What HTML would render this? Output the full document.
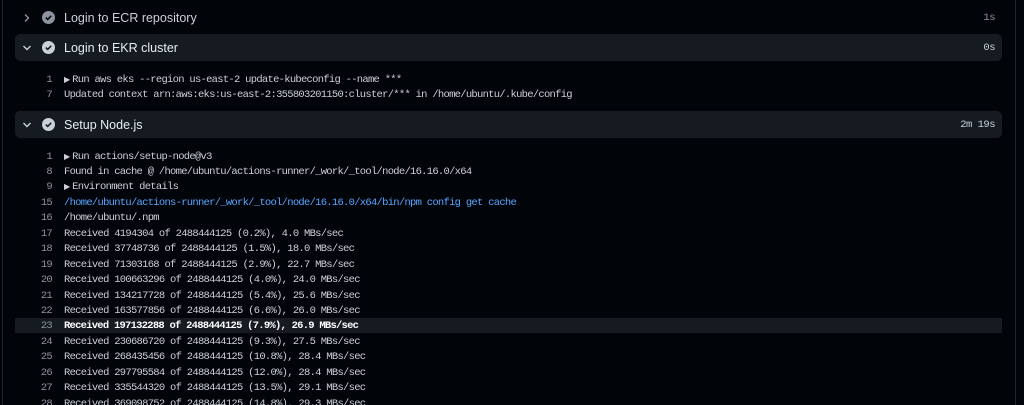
<!DOCTYPE html>
<html><head><style>
html,body{margin:0;width:1024px;height:405px;background:#010409;overflow:hidden;position:relative;font-family:"Liberation Sans",sans-serif;}
.vl{position:absolute;top:0;bottom:0;width:1px;background:#21262d}
.hdr{position:absolute;left:15px;width:987px;height:27px;border-radius:5px;}
.hdr.bg{background:#161b22}
.t{position:absolute;left:49px;top:6.5px;font-size:12.5px;color:#e6edf3}
.d{position:absolute;right:7px;top:7.5px;font:10.5px "Liberation Mono",monospace;letter-spacing:-0.5px;color:#c9d1d9}
.ic{position:absolute;left:27px;top:7px}
.chev{position:absolute;left:6px;top:8px}
.ln{position:absolute;left:15px;width:987px;height:15.45px;font:10.5px/15.45px "Liberation Mono",monospace;letter-spacing:-0.72px;color:#c9d1d9;white-space:pre}
.ln .n{position:absolute;left:0;width:37px;text-align:right;color:#8b949e}
.ln .c{position:absolute;left:49px;top:1.5px}
.ln .n{top:1.5px}
.tri{font-size:8px;letter-spacing:0;margin-right:2px}
.hl{background:#161b22}
.hl .c{color:#fff;font-weight:bold;letter-spacing:-0.75px}
.blue{color:#58a6ff}
</style></head><body>
<div class="vl" style="left:2px"></div>
<div class="vl" style="left:1015px"></div>

<div class="hdr" style="top:4px">
<svg class="chev" width="12" height="12" viewBox="0 0 12 12"><path d="M4 2.5L7.5 6L4 9.5" stroke="#8b949e" stroke-width="1.4" fill="none"/></svg>
<svg class="ic" width="13" height="13" viewBox="0 0 13 13"><circle cx="6.5" cy="6.5" r="6.5" fill="#8b949e"/><path d="M3.8 6.6L5.7 8.4L9.2 4.8" stroke="#010409" stroke-width="1.5" fill="none"/></svg>
<div class="t" style="color:#c9d1d9">Login to ECR repository</div><div class="d" style="color:#8b949e">1s</div></div>

<div class="hdr bg" style="top:34px">
<svg class="chev" width="12" height="12" viewBox="0 0 12 12"><path d="M2.5 4L6 7.5L9.5 4" stroke="#c9d1d9" stroke-width="1.4" fill="none"/></svg>
<svg class="ic" width="13" height="13" viewBox="0 0 13 13"><circle cx="6.5" cy="6.5" r="6.5" fill="#c9d1d9"/><path d="M3.8 6.6L5.7 8.4L9.2 4.8" stroke="#161b22" stroke-width="1.5" fill="none"/></svg>
<div class="t">Login to EKR cluster</div><div class="d">0s</div></div>

<div class="ln" style="top:71px"><span class="n">1</span><span class="c"><span class="tri">▶</span>Run aws eks --region us-east-2 update-kubeconfig --name ***</span></div>
<div class="ln" style="top:86.5px"><span class="n">7</span><span class="c">Updated context arn:aws:eks:us-east-2:355803201150:cluster/*** in /home/ubuntu/.kube/config</span></div>

<div class="hdr bg" style="top:111px">
<svg class="chev" width="12" height="12" viewBox="0 0 12 12"><path d="M2.5 4L6 7.5L9.5 4" stroke="#c9d1d9" stroke-width="1.4" fill="none"/></svg>
<svg class="ic" width="13" height="13" viewBox="0 0 13 13"><circle cx="6.5" cy="6.5" r="6.5" fill="#c9d1d9"/><path d="M3.8 6.6L5.7 8.4L9.2 4.8" stroke="#161b22" stroke-width="1.5" fill="none"/></svg>
<div class="t">Setup Node.js</div><div class="d">2m 19s</div></div>

<div class="ln" style="top:148px"><span class="n">1</span><span class="c"><span class="tri">▶</span>Run actions/setup-node@v3</span></div>
<div class="ln" style="top:163.45px"><span class="n">8</span><span class="c">Found in cache @ /home/ubuntu/actions-runner/_work/_tool/node/16.16.0/x64</span></div>
<div class="ln" style="top:178.9px"><span class="n">9</span><span class="c"><span class="tri">▶</span>Environment details</span></div>
<div class="ln" style="top:194.35px"><span class="n">15</span><span class="c blue">/home/ubuntu/actions-runner/_work/_tool/node/16.16.0/x64/bin/npm config get cache</span></div>
<div class="ln" style="top:209.8px"><span class="n">16</span><span class="c">/home/ubuntu/.npm</span></div>
<div class="ln" style="top:225.25px"><span class="n">17</span><span class="c">Received 4194304 of 2488444125 (0.2%), 4.0 MBs/sec</span></div>
<div class="ln" style="top:240.7px"><span class="n">18</span><span class="c">Received 37748736 of 2488444125 (1.5%), 18.0 MBs/sec</span></div>
<div class="ln" style="top:256.15px"><span class="n">19</span><span class="c">Received 71303168 of 2488444125 (2.9%), 22.7 MBs/sec</span></div>
<div class="ln" style="top:271.6px"><span class="n">20</span><span class="c">Received 100663296 of 2488444125 (4.0%), 24.0 MBs/sec</span></div>
<div class="ln" style="top:287.05px"><span class="n">21</span><span class="c">Received 134217728 of 2488444125 (5.4%), 25.6 MBs/sec</span></div>
<div class="ln" style="top:302.5px"><span class="n">22</span><span class="c">Received 163577856 of 2488444125 (6.6%), 26.0 MBs/sec</span></div>
<div class="ln hl" style="top:317.95px"><span class="n">23</span><span class="c">Received 197132288 of 2488444125 (7.9%), 26.9 MBs/sec</span></div>
<div class="ln" style="top:333.4px"><span class="n">24</span><span class="c">Received 230686720 of 2488444125 (9.3%), 27.5 MBs/sec</span></div>
<div class="ln" style="top:348.85px"><span class="n">25</span><span class="c">Received 268435456 of 2488444125 (10.8%), 28.4 MBs/sec</span></div>
<div class="ln" style="top:364.3px"><span class="n">26</span><span class="c">Received 297795584 of 2488444125 (12.0%), 28.4 MBs/sec</span></div>
<div class="ln" style="top:379.75px"><span class="n">27</span><span class="c">Received 335544320 of 2488444125 (13.5%), 29.1 MBs/sec</span></div>
<div class="ln" style="top:395.2px"><span class="n">28</span><span class="c">Received 369098752 of 2488444125 (14.8%), 29.3 MBs/sec</span></div>
</body></html>
